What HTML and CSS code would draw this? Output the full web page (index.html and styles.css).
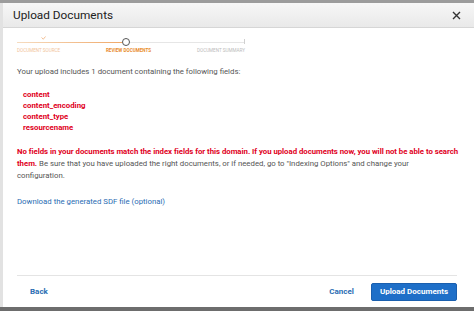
FILE: index.html
```html
<!DOCTYPE html>
<html lang="en">
<head>
    <meta charset="UTF-8">
    <title>Upload Documents</title>
    <link rel="stylesheet" href="styles.css">
</head>
<body>

<div class="frame">
    <div class="dialog">
        <header class="dialog-header">
            <h2>Upload Documents</h2>
            <svg class="close" width="9" height="9" viewBox="0 0 9 9">
                <path d="M1 1L8 8M8 1L1 8" stroke="#333" stroke-width="1.4" fill="none"/>
            </svg>
        </header>

        <div class="dialog-body">
            <!-- Wizard steps -->
            <div class="steps">
                <div class="track">
                    <div class="track-done"></div>
                    <svg class="check" width="5" height="4" viewBox="0 0 5 4">
                        <path d="M0.5 1.5L2.3 3.2L4.5 0.5" stroke="#f0b07a" stroke-width="0.8" fill="none"/>
                    </svg>
                    <span class="dot"></span>
                    <span class="track-end"></span>
                </div>
                <div class="step-labels">
                    <span class="step done">DOCUMENT SOURCE</span>
                    <span class="step current">REVIEW DOCUMENTS</span>
                    <span class="step">DOCUMENT SUMMARY</span>
                </div>
            </div>

            <p class="intro">Your upload includes 1 document containing the following fields:</p>

            <ul class="fields">
                <li>content</li>
                <li>content_encoding</li>
                <li>content_type</li>
                <li>resourcename</li>
            </ul>

            <p class="warning"><strong>No fields in your documents match the index fields for this domain. If you upload documents now, you will not be able to search them.</strong> Be sure that you have uploaded the right documents, or if needed, go to "Indexing Options" and change your<br>configuration.</p>

            <a class="download" href="#">Download the generated SDF file (optional)</a>
        </div>

        <footer class="dialog-footer">
            <a class="link-btn" href="#">Back</a>
            <div class="actions">
                <a class="link-btn" href="#">Cancel</a>
                <button type="button" class="primary">Upload Documents</button>
            </div>
        </footer>
    </div>
</div>

</body>
</html>
```

FILE: styles.css
```css
html, body {
    margin: 0;
    height: 100%;
}
body {
    font-family: Roboto, "Liberation Sans", sans-serif;
    background-color: #e2e2e2;
}
.frame {
    box-sizing: border-box;
    height: 311px;
    border-top: 3px solid #9c9c9c;
    border-bottom: 4px solid #6d6d6d;
    padding-left: 3px;
}
.dialog {
    height: 100%;
    background-color: #fff;
    display: flex;
    flex-direction: column;
}
.dialog-header {
    height: 25px;
    box-sizing: border-box;
    display: flex;
    align-items: center;
    justify-content: space-between;
    padding: 0 13px 0 10px;
    background: linear-gradient(#f7f7f7, #e9e9e9);
    border-bottom: 1px solid #d6d6d6;
}
.dialog-header h2 {
    margin: 0;
    font-size: 11.8px;
    font-weight: 400;
    color: #222;
}
.dialog-body {
    flex: 1;
    padding: 7px 12px 0 14px;
    font-size: 7.8px;
    color: #555;
}
.steps {
    width: 228px;
}
.track {
    position: relative;
    height: 7px;
    border-bottom: 1px solid #e6e6e6;
}
.track-done {
    position: absolute;
    left: 0;
    bottom: -1px;
    width: 106px;
    height: 1px;
    background: linear-gradient(90deg, #f6dcc0, #f0a868);
}
.check {
    position: absolute;
    left: 24px;
    top: 1px;
}
.dot {
    position: absolute;
    left: 105px;
    bottom: -4px;
    width: 6px;
    height: 6px;
    border: 1px solid #555;
    border-radius: 50%;
    background-color: #fff;
}
.track-end {
    position: absolute;
    right: 0;
    bottom: -2px;
    width: 1px;
    height: 5px;
    background-color: #d0d0d0;
}
.step-labels {
    display: flex;
    justify-content: space-between;
    margin-top: 5px;
    font-size: 4.6px;
    color: #bbb;
}
.step.done {
    color: #f2c49a;
}
.step.current {
    color: #e98b2c;
    font-weight: bold;
}
.intro {
    margin: 14px 0 13px;
}
.fields {
    list-style: none;
    margin: 0 0 13px 6px;
    padding: 0;
    color: #e0001b;
    font-weight: bold;
    line-height: 11px;
}
.warning {
    margin: 0 0 15px;
    padding-right: 2px;
    line-height: 12px;
}
.warning strong {
    color: #e0001b;
    letter-spacing: -0.03px;
}
.download {
    color: #2a6db3;
    text-decoration: none;
}
.dialog-footer {
    margin: 0 17px 0 14px;
    border-top: 1px solid #e4e4e4;
    height: 31px;
    display: flex;
    align-items: center;
    justify-content: space-between;
    padding-left: 13px;
}
.link-btn {
    font-size: 8px;
    font-weight: bold;
    color: #2a6db3;
    text-decoration: none;
}
.actions {
    display: flex;
    align-items: center;
    gap: 17px;
}
.primary {
    height: 18px;
    padding: 0 8px;
    font-family: inherit;
    font-size: 8px;
    font-weight: bold;
    color: #fff;
    background-color: #1e6fc8;
    border: 1px solid #1a5fae;
    border-radius: 2px;
}
```
